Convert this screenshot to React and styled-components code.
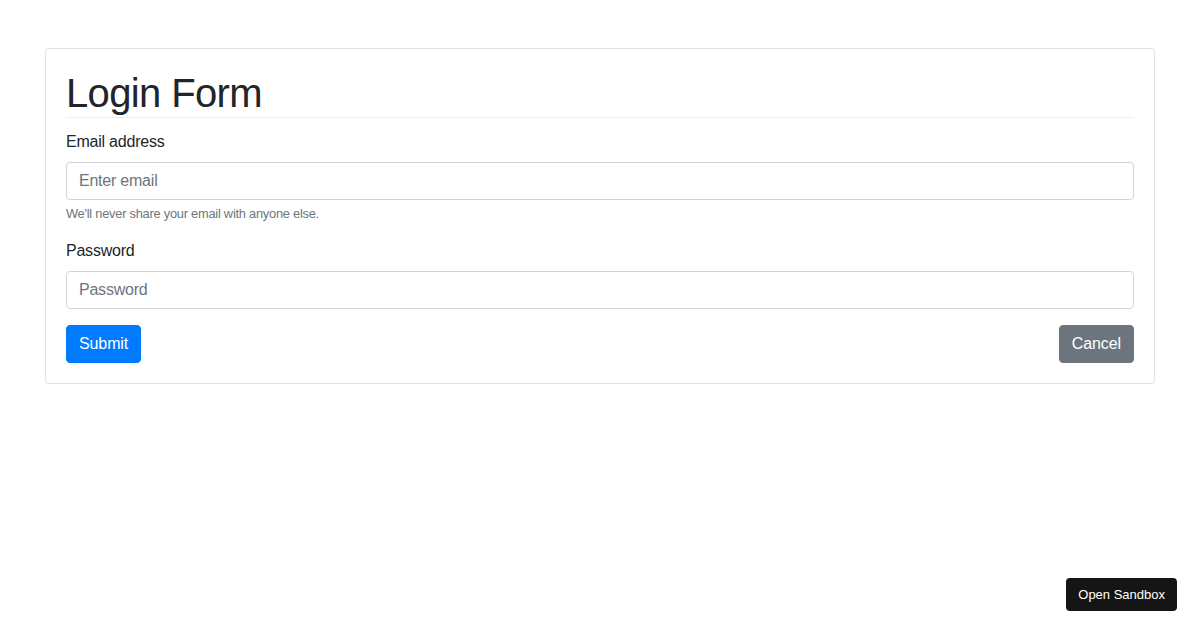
import React from 'react';
import styled, { createGlobalStyle } from 'styled-components';

const GlobalStyle = createGlobalStyle`
    *, *::before, *::after { box-sizing: border-box; }
    body {
        margin: 0;
        font-family: "Liberation Sans", Arial, sans-serif;
        font-size: 16px;
        line-height: 1.5;
        letter-spacing: -0.014em;
        color: #212529;
        background: #fff;
    }
`;

const Container = styled.div`
    max-width: 1140px;
    margin: 48px auto 0;
    padding: 0 15px;
`;

const Card = styled.div`
    border: 1px solid rgba(0, 0, 0, 0.125);
    border-radius: 4px;
    padding: 20px;
`;

const Title = styled.h1`
    margin: 0 0 12px;
    font-size: 40px;
    font-weight: 400;
    line-height: 48px;
    letter-spacing: -0.016em;
    border-bottom: 1px solid #eeeeee;
`;

const Group = styled.div`
    margin-bottom: 16px;
`;

const Label = styled.label`
    display: inline-block;
    margin-bottom: 8px;
`;

const Input = styled.input`
    display: block;
    width: 100%;
    height: 38px;
    padding: 6px 12px;
    font: inherit;
    letter-spacing: inherit;
    color: #495057;
    border: 1px solid #ced4da;
    border-radius: 4px;
    &::placeholder { color: #6c757d; opacity: 1; }
`;

const Help = styled.small`
    display: block;
    margin-top: 4px;
    font-size: 12.8px;
    color: #6c757d;
`;

const Actions = styled.div`
    display: flex;
    justify-content: space-between;
`;

const Button = styled.button`
    height: 38px;
    padding: 6px 12px;
    font: inherit;
    letter-spacing: -0.007em;
    color: #fff;
    background: ${p => p.$variant === 'secondary' ? '#6c757d' : '#007bff'};
    border: 1px solid ${p => p.$variant === 'secondary' ? '#6c757d' : '#007bff'};
    border-radius: 4px;
`;

const SandboxLink = styled.a`
    position: fixed;
    right: 23px;
    bottom: 19px;
    padding: 8px 12px;
    font-size: 13px;
    line-height: 17px;
    letter-spacing: normal;
    color: #fff;
    background: #151515;
    border-radius: 4px;
    text-decoration: none;
`;

export default function App() {
    return (
        <>
            <GlobalStyle />
            <Container>
                <Card>
                    <Title>Login Form</Title>
                    <form onSubmit={e => e.preventDefault()}>
                        <Group>
                            <Label htmlFor="email">Email address</Label>
                            <Input id="email" type="email" placeholder="Enter email" />
                            <Help>We'll never share your email with anyone else.</Help>
                        </Group>
                        <Group>
                            <Label htmlFor="password">Password</Label>
                            <Input id="password" type="password" placeholder="Password" />
                        </Group>
                        <Actions>
                            <Button type="submit">Submit</Button>
                            <Button type="button" $variant="secondary">Cancel</Button>
                        </Actions>
                    </form>
                </Card>
            </Container>
            <SandboxLink href="#">Open Sandbox</SandboxLink>
        </>
    );
}
